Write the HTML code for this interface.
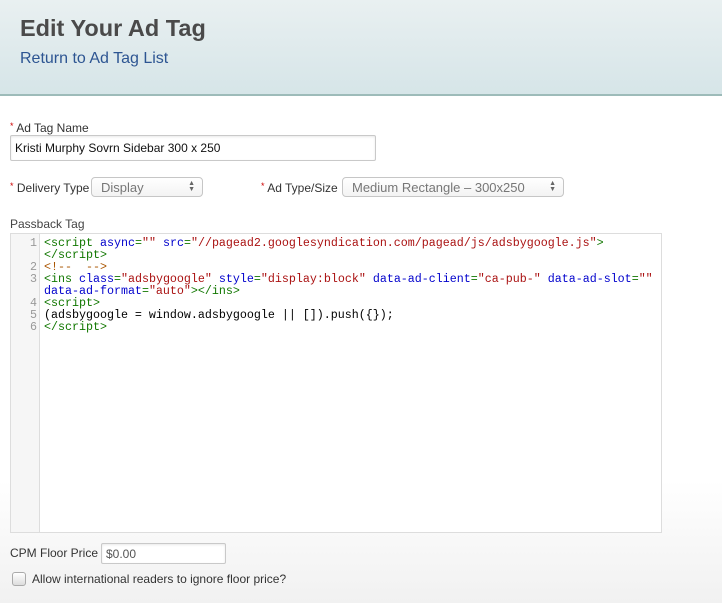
<!DOCTYPE html>
<html><head><meta charset="utf-8"><style>
*{box-sizing:border-box;margin:0;padding:0}
body{width:722px;height:603px;overflow:hidden;font-family:"Liberation Sans",Arial,sans-serif;font-size:12px;color:#333;background:linear-gradient(#fff 0,#fff 480px,#f1f1f1 603px);position:relative}
.hdr{position:absolute;left:0;top:0;width:722px;height:96px;background:linear-gradient(#e9f0f1,#d6e5e8);border-bottom:2px solid #9dbbb9}
h1{position:absolute;left:20px;top:15px;font-size:23.5px;font-weight:bold;color:#4a4a4a}
.ret{position:absolute;left:20px;top:50px;font-size:16px;color:#2d5592}
.abs{position:absolute}
.req{color:#c00;font-size:9px;vertical-align:top}
.inp{position:absolute;border:1px solid #c9c9c9;background:#fff;border-radius:2px;box-shadow:inset 0 1px 2px #e8e8e8}
.sel{position:absolute;border:1px solid #c6c6c6;border-radius:4px;background:linear-gradient(#fff,#f3f3f3);color:#777;font-size:13px;padding:2px 0 0 9px;height:20px}
.arr{position:absolute;right:7px;top:3px;font-size:7px;line-height:6px;color:#666}
.code{position:absolute;left:10px;top:233px;width:652px;height:300px;border:1px solid #ddd;background:#fff}
.gut{position:absolute;left:0;top:0;width:29px;height:100%;background:#f6f6f6;border-right:1px solid #ddd}
pre{font-family:"Liberation Mono",monospace;font-size:11.67px;line-height:12px;position:absolute;top:3px;white-space:pre}
.ln{left:0;width:26px;text-align:right;color:#999}
.tx{left:33px;color:#117700}
.a{color:#0000cc}.s{color:#aa1111}.c{color:#aa5500}.p{color:#000}
</style></head><body>
<div class="hdr"><h1>Edit Your Ad Tag</h1><div class="ret">Return to Ad Tag List</div></div>

<div class="abs" style="left:10px;top:121px"><span class="req">*</span> Ad Tag Name</div>
<div class="inp" style="left:10px;top:135px;width:366px;height:26px;padding:5px 0 0 4px;color:#111">Kristi Murphy Sovrn Sidebar 300 x 250</div>

<div class="abs" style="left:10px;top:181px"><span class="req">*</span> Delivery Type</div>
<div class="sel" style="left:91px;top:177px;width:112px">Display<div class="arr">▲<br>▼</div></div>
<div class="abs" style="left:261px;top:181px"><span class="req">*</span> Ad Type/Size</div>
<div class="sel" style="left:342px;top:177px;width:222px">Medium Rectangle – 300x250<div class="arr">▲<br>▼</div></div>

<div class="abs" style="left:10px;top:217px;color:#444">Passback Tag</div>
<div class="code"><div class="gut"></div>
<pre class="ln">1

2
3

4
5
6</pre>
<pre class="tx">&lt;script <span class="a">async</span>=<span class="s">""</span> <span class="a">src</span>=<span class="s">"//pagead2.googlesyndication.com/pagead/js/adsbygoogle.js"</span>&gt;
&lt;/script&gt;
<span class="c">&lt;!--  --&gt;</span>
&lt;ins <span class="a">class</span>=<span class="s">"adsbygoogle"</span> <span class="a">style</span>=<span class="s">"display:block"</span> <span class="a">data-ad-client</span>=<span class="s">"ca-pub-"</span> <span class="a">data-ad-slot</span>=<span class="s">""</span>
<span class="a">data-ad-format</span>=<span class="s">"auto"</span>&gt;&lt;/ins&gt;
&lt;script&gt;
<span class="p">(adsbygoogle = window.adsbygoogle || []).push({});</span>
&lt;/script&gt;</pre>
</div>

<div class="abs" style="left:10px;top:546px;color:#333">CPM Floor Price</div>
<div class="inp" style="left:101px;top:543px;width:125px;height:21px;padding:3px 0 0 4px;color:#555">$0.00</div>
<div class="abs" style="left:12px;top:572px;width:14px;height:14px;border:1px solid #aaa;border-radius:3px;background:linear-gradient(#fff,#ddd)"></div>
<div class="abs" style="left:32px;top:572px;color:#333">Allow international readers to ignore floor price?</div>
</body></html>
